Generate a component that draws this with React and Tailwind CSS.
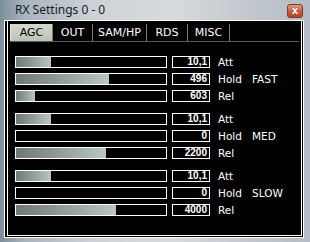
import React from "react";

const groups = [
  { label: "FAST", rows: [["10,1", 35, "Att"], ["496", 93, "Hold"], ["603", 19, "Rel"]] },
  { label: "MED", rows: [["10,1", 35, "Att"], ["0", 0, "Hold"], ["2200", 90, "Rel"]] },
  { label: "SLOW", rows: [["10,1", 35, "Att"], ["0", 0, "Hold"], ["4000", 100, "Rel"]] },
];

const tabs = [
  { name: "AGC", w: "w-[43px]", active: true },
  { name: "OUT", w: "w-[40px]" },
  { name: "SAM/HP", w: "w-[54px]" },
  { name: "RDS", w: "w-[41px]" },
  { name: "MISC", w: "w-[42px]" },
];

function Row({ value, fill, label, group }) {
  return (
    <div className="flex items-center h-[12px]">
      <div className="w-[152px] h-[12px] border border-white bg-black flex">
        <div
          className="h-full bg-gradient-to-r from-[#6f7975] to-[#bac6c2]"
          style={{ width: fill }}
        />
      </div>
      <div className="ml-[5px] w-[38px] h-[12px] border border-white bg-black flex items-center justify-end pr-[2px] text-white font-bold text-[10px] leading-none [font-family:'Liberation_Sans',Arial,sans-serif]">
        {value}
      </div>
      <div className="ml-[8px] w-[34px] text-white text-[10.5px] leading-none [font-family:'DejaVu_Sans',sans-serif]">
        {label}
      </div>
      <div className="text-white text-[10.5px] leading-none [font-family:'DejaVu_Sans',sans-serif]">
        {group}
      </div>
    </div>
  );
}

export default function App() {
  return (
    <div className="w-[310px] h-[242px] overflow-hidden flex flex-col bg-[linear-gradient(90deg,#7f8e9d_0%,#a9b4bf_8%,#cdd2d7_30%,#d8dbde_55%,#c2c8ce_80%,#b4bcc5_100%)]">
      <div className="h-[20px] flex items-start shrink-0">
        <div className="ml-[15px] mt-[2px] text-[12px] leading-[16px] text-[#1b1b1b] [font-family:'Noto_Sans',sans-serif]">
          RX Settings 0 - 0
        </div>
        <div className="ml-auto mr-[7px] mt-[4px] w-[16px] h-[14px] rounded-[3px] border border-[#7b3b2c] bg-gradient-to-b from-[#e79a84] via-[#cf5a3e] to-[#b8442b] flex items-center justify-center">
          <span className="text-white font-bold text-[10px] leading-none [font-family:'DejaVu_Sans',sans-serif] [text-shadow:0_0_1px_#5a1a10]">
            x
          </span>
        </div>
      </div>
      <div className="ml-[4px] w-[300px] h-[218px] border border-white bg-black pl-[2px] pr-[1px] pb-[1px] flex">
        <div className="flex-1 border border-t-0 border-white bg-black pl-[2px] pt-[3px] flex flex-col">
          <div className="flex border-b border-[#5a5a5a] mr-[2px]">
            {tabs.map((t) => (
              <div
                key={t.name}
                className={
                  t.w +
                  " h-[17px] flex items-center justify-center border-r border-[#7a7a7a] text-[11px] leading-none [font-family:'DejaVu_Sans',sans-serif] " +
                  (t.active
                    ? "bg-gradient-to-b from-[#d3dacd] to-[#b9c3b3] text-black border-l border-l-[#e6eae2]"
                    : "text-white")
                }
              >
                {t.name}
              </div>
            ))}
          </div>
          <div className="pl-[5px] mt-[14px] flex flex-col gap-[11px]">
            {groups.map((g) => (
              <div key={g.label} className="flex flex-col gap-[5px]">
                {g.rows.map((r, i) => (
                  <Row
                    key={i}
                    value={r[0]}
                    fill={r[1]}
                    label={r[2]}
                    group={i === 1 ? g.label : ""}
                  />
                ))}
              </div>
            ))}
          </div>
        </div>
      </div>
    </div>
  );
}
